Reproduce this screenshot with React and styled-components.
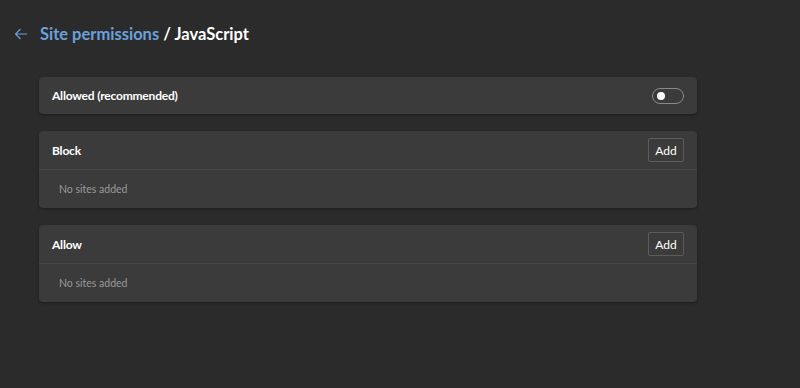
import React from 'react';
import styled, { createGlobalStyle } from 'styled-components';

const GlobalStyle = createGlobalStyle`
  html, body {
    margin: 0;
    padding: 0;
    background: #2b2b2b;
    font-family: Lato, "Open Sans", sans-serif;
    color: #ffffff;
  }
`;

const Page = styled.div`
  width: 800px;
  height: 388px;
  background: #2b2b2b;
  box-sizing: border-box;
  padding: 20px 0 0 0;
`;

const Header = styled.header`
  display: flex;
  align-items: center;
  height: 28px;
  padding-left: 13px;
`;

const BackButton = styled.button`
  display: flex;
  align-items: center;
  justify-content: center;
  width: 16px;
  height: 16px;
  padding: 0;
  margin-right: 11px;
  background: none;
  border: 0;
  cursor: pointer;
`;

const Title = styled.h1`
  margin: 0;
  font-size: 16.5px;
  font-weight: 700;
  color: #ffffff;

  a {
    color: #6aa0dc;
    text-decoration: none;
  }
`;

const Sections = styled.div`
  display: flex;
  flex-direction: column;
  gap: 17px;
  width: 658px;
  margin: 29px 0 0 39px;
`;

const Card = styled.section`
  background: #3b3b3b;
  border-radius: 4px;
  box-shadow: 0 1px 3px rgba(0, 0, 0, 0.35);
`;

const Row = styled.div`
  display: flex;
  align-items: center;
  justify-content: space-between;
  height: ${({ $h }) => $h || 38}px;
  padding: 0 13px;
  border-bottom: ${({ $divider }) => ($divider ? '1px solid #474747' : 'none')};
`;

const Label = styled.span`
  font-size: 12px;
  font-weight: 700;
  letter-spacing: -0.2px;
  color: #ffffff;
`;

const Empty = styled.div`
  display: flex;
  align-items: center;
  height: 38px;
  padding-left: 20px;
  font-size: 10.5px;
  color: #9a9a9a;
`;

const AddButton = styled.button`
  width: 36px;
  height: 24px;
  padding: 0;
  background: #3b3b3b;
  border: 1px solid #5c5c5c;
  border-radius: 2px;
  color: #ffffff;
  font-family: inherit;
  font-size: 12px;
  cursor: pointer;
`;

const Toggle = styled.div`
  position: relative;
  width: 30px;
  height: 14px;
  border: 1px solid #8a8a8a;
  border-radius: 8px;
`;

const Knob = styled.span`
  position: absolute;
  top: 3px;
  left: ${({ $on }) => ($on ? '19px' : '4px')};
  width: 8px;
  height: 8px;
  border-radius: 50%;
  background: #ffffff;
`;

function SiteList({ title }) {
  return (
    <Card>
      <Row $divider>
        <Label>{title}</Label>
        <AddButton>Add</AddButton>
      </Row>
      <Empty>No sites added</Empty>
    </Card>
  );
}

export default function App() {
  return (
    <Page>
      <GlobalStyle />
      <Header>
        <BackButton aria-label="Back">
          <svg width="16" height="16" viewBox="0 0 16 16" fill="none">
            <path d="M14 8H2.5M7.5 3L2.5 8l5 5" stroke="#6aa0dc" strokeWidth="1.1" />
          </svg>
        </BackButton>
        <Title>
          <a href="#">Site permissions</a> / JavaScript
        </Title>
      </Header>
      <Sections>
        <Card>
          <Row $h={37}>
            <Label>Allowed (recommended)</Label>
            <Toggle>
              <Knob />
            </Toggle>
          </Row>
        </Card>
        <SiteList title="Block" />
        <SiteList title="Allow" />
      </Sections>
    </Page>
  );
}
